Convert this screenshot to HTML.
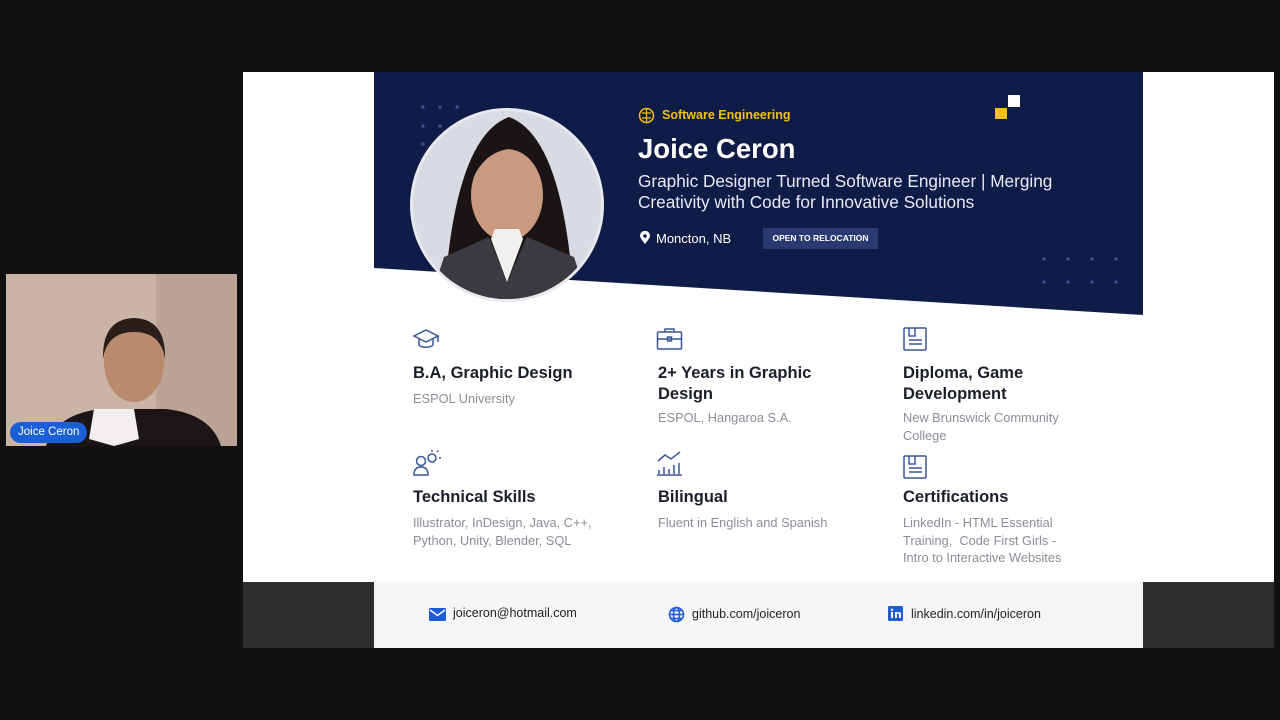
<!DOCTYPE html>
<html><head><meta charset="utf-8"><style>
*{margin:0;padding:0;box-sizing:border-box}
body{width:1280px;height:720px;background:#111;position:relative;overflow:hidden;font-family:"Liberation Sans",sans-serif}
.abs{position:absolute}
.slide{left:243px;top:72px;width:1031px;height:510px;background:#fff}
.grayL{left:243px;top:582px;width:131px;height:66px;background:#2e2e2e}
.grayR{left:1143px;top:582px;width:131px;height:66px;background:#2e2e2e}
.foot{left:374px;top:582px;width:769px;height:66px;background:#f5f6f8}
.h{font-weight:bold;font-size:16.5px;color:#1b1f2a;line-height:21px}
.s{font-size:12.8px;color:#8a8e96;line-height:17.5px}
.ft{font-size:12.5px;color:#222}
</style></head><body>
<div class="abs slide"></div>
<div class="abs grayL"></div><div class="abs grayR"></div>
<svg class="abs" style="left:374px;top:72px" width="769" height="244">
<polygon points="0,0 769,0 769,243 0,196" fill="#0f1c48"/>
<g fill="#3d5290"><circle cx="49" cy="35" r="1.6"/><circle cx="66" cy="35" r="1.6"/><circle cx="83" cy="35" r="1.6"/><circle cx="49" cy="54" r="1.6"/><circle cx="66" cy="54" r="1.6"/><circle cx="49" cy="72" r="1.6"/>
<circle cx="670" cy="187" r="1.6"/><circle cx="694" cy="187" r="1.6"/><circle cx="718" cy="187" r="1.6"/><circle cx="742" cy="187" r="1.6"/>
<circle cx="670" cy="210" r="1.6"/><circle cx="694" cy="210" r="1.6"/><circle cx="718" cy="210" r="1.6"/><circle cx="742" cy="210" r="1.6"/></g>
<rect x="621" y="36" width="12" height="11" fill="#f2c014"/><rect x="634" y="23" width="12" height="12" fill="#fff"/>
</svg>
<svg class="abs" style="left:409px;top:107px" width="196" height="196">
<defs><clipPath id="c"><circle cx="98" cy="98" r="94"/></clipPath></defs>
<circle cx="98" cy="98" r="97" fill="#e8e9ee"/>
<g clip-path="url(#c)">
<rect width="196" height="196" fill="#d9dbe2"/>
<path d="M35 196 Q45 30 100 10 Q155 30 165 196Z" fill="#1a1414"/>
<ellipse cx="98" cy="88" rx="36" ry="46" fill="#c99a7f"/>
<path d="M62 75 Q70 25 100 22 Q130 25 134 75 Q125 45 100 42 Q75 45 62 75Z" fill="#1a1414"/>
<path d="M20 196 L35 150 L80 130 L98 175 L118 130 L165 150 L180 196Z" fill="#3a3a40"/>
<path d="M82 132 L98 175 L114 132 L110 122 L86 122Z" fill="#f2f0ee"/>
</g></svg>
<svg class="abs" style="left:638px;top:107px" width="17" height="17"><circle cx="8.5" cy="8.5" r="7" fill="none" stroke="#f2c014" stroke-width="1.5"/><path d="M8.5 2v13M4 6h9M4 11h9" stroke="#f2c014" stroke-width="1.2"/></svg>
<div class="abs" style="left:662px;top:108px;color:#f2c014;font-weight:bold;font-size:12.5px">Software Engineering</div>
<div class="abs" style="left:638px;top:133px;color:#fff;font-weight:bold;font-size:27.5px">Joice Ceron</div>
<div class="abs" style="left:638px;top:171px;color:#e8ebf4;font-size:17.2px;line-height:20.5px;width:470px">Graphic Designer Turned Software Engineer | Merging Creativity with Code for Innovative Solutions</div>
<svg class="abs" style="left:640px;top:231px" width="10" height="14"><path d="M5 13 C1 8 0 6 0 4.8A5 5 0 0 1 10 4.8C10 6 9 8 5 13Z" fill="#fff"/><circle cx="5" cy="5" r="1.8" fill="#0f1c48"/></svg>
<div class="abs" style="left:656px;top:231px;color:#fff;font-size:13px">Moncton, NB</div>
<div class="abs" style="left:763px;top:228px;width:115px;height:21px;background:#2a3a70;color:#fff;font-size:8.5px;font-weight:bold;text-align:center;line-height:21px">OPEN TO RELOCATION</div>

<svg class="abs" style="left:412px;top:328px" width="28" height="24" fill="none" stroke="#3a5598" stroke-width="1.5"><path d="M2 8 L14 2 L26 8 L14 14Z"/><path d="M7 11v6c3 3 11 3 14 0v-6"/><path d="M26 8v6"/></svg>
<svg class="abs" style="left:656px;top:327px" width="27" height="24" fill="none" stroke="#3a5598" stroke-width="1.5"><rect x="1.5" y="5" width="24" height="17" rx="1"/><path d="M9 5V2h9v3M1.5 12h24"/><rect x="11.5" y="10" width="4" height="4"/></svg>
<svg class="abs" style="left:902px;top:326px" width="26" height="26" fill="none" stroke="#3a5598" stroke-width="1.5"><rect x="2" y="2" width="22" height="22" rx="1"/><path d="M7 2v8h6V2M7 14h13M7 18h13"/></svg>
<svg class="abs" style="left:412px;top:449px" width="30" height="28" fill="none" stroke="#3a5598" stroke-width="1.5"><circle cx="9" cy="12" r="4.5"/><path d="M2 26c0-6 3-8 7-8s7 2 7 8Z"/><circle cx="20" cy="9" r="4"/><path d="M20 1v2M27 9h2M25 3l1.5-1.5"/></svg>
<svg class="abs" style="left:656px;top:450px" width="28" height="26" fill="none" stroke="#3a5598" stroke-width="1.5"><path d="M2 11l7-6 6 4 9-7"/><path d="M3 24v-4M8 24v-7M13 24v-5M18 24v-9M23 24v-11M1 25h25"/></svg>
<svg class="abs" style="left:902px;top:454px" width="26" height="26" fill="none" stroke="#3a5598" stroke-width="1.5"><rect x="2" y="2" width="22" height="22" rx="1"/><path d="M7 2v8h6V2M7 14h13M7 18h13"/></svg>

<div class="abs h" style="left:413px;top:363px">B.A, Graphic Design</div>
<div class="abs s" style="left:413px;top:390px">ESPOL University</div>
<div class="abs h" style="left:658px;top:363px;width:200px">2+ Years in Graphic Design</div>
<div class="abs s" style="left:658px;top:409px">ESPOL, Hangaroa S.A.</div>
<div class="abs h" style="left:903px;top:363px;width:200px">Diploma, Game Development</div>
<div class="abs s" style="left:903px;top:409px;width:180px">New Brunswick Community College</div>
<div class="abs h" style="left:413px;top:487px">Technical Skills</div>
<div class="abs s" style="left:413px;top:514px;width:200px">Illustrator, InDesign, Java, C++, Python, Unity, Blender, SQL</div>
<div class="abs s" style="left:658px;top:514px">Fluent in English and Spanish</div>
<div class="abs h" style="left:658px;top:487px">Bilingual</div>
<div class="abs h" style="left:903px;top:487px">Certifications</div>
<div class="abs s" style="left:903px;top:514px;width:172px">LinkedIn - HTML Essential Training,&nbsp; Code First Girls - Intro to Interactive Websites</div>

<div class="abs foot"></div>
<svg class="abs" style="left:429px;top:608px" width="17" height="13"><rect width="17" height="13" rx="1" fill="#1f5bd6"/><path d="M1 2l7.5 5.5L16 2" stroke="#fff" stroke-width="1.5" fill="none"/></svg>
<div class="abs ft" style="left:453px;top:606px">joiceron@hotmail.com</div>
<svg class="abs" style="left:668px;top:606px" width="17" height="17" fill="none" stroke="#1f5bd6" stroke-width="1.6"><circle cx="8.5" cy="8.5" r="7"/><ellipse cx="8.5" cy="8.5" rx="3" ry="7"/><path d="M1.5 8.5h14M3 4.5h11M3 12.5h11"/></svg>
<div class="abs ft" style="left:692px;top:607px">github.com/joiceron</div>
<svg class="abs" style="left:888px;top:606px" width="15" height="15"><rect width="15" height="15" rx="1.5" fill="#1f5bd6"/><rect x="3" y="6" width="2" height="6" fill="#fff"/><circle cx="4" cy="3.8" r="1.2" fill="#fff"/><path d="M7 12V6h2v1c1-1.5 4-1.5 4 1.2V12h-2V8.5c0-1.2-2-1.2-2 0V12Z" fill="#fff"/></svg>
<div class="abs ft" style="left:911px;top:607px">linkedin.com/in/joiceron</div>

<svg class="abs" style="left:6px;top:274px" width="231" height="172">
<rect width="231" height="172" fill="#c9b4a6"/>
<rect x="150" width="81" height="172" fill="#bba396"/>
<path d="M40 172 Q50 140 95 135 L160 135 Q205 140 215 172Z" fill="#1b1518"/>
<path d="M88 135 L128 135 L133 165 L108 172 L83 165Z" fill="#f3eeee"/>
<ellipse cx="128" cy="88" rx="30" ry="40" fill="#b98a6e"/>
<path d="M97 85 Q96 45 128 44 Q160 45 159 85 Q155 58 128 58 Q101 58 97 85Z" fill="#2a1d1a"/>
</svg>
<div class="abs" style="left:10px;top:422px;height:21px;padding:0 8px;background:#1a5fd6;border-radius:11px;color:#fff;font-size:11.5px;line-height:21px">Joice Ceron</div>
</body></html>
